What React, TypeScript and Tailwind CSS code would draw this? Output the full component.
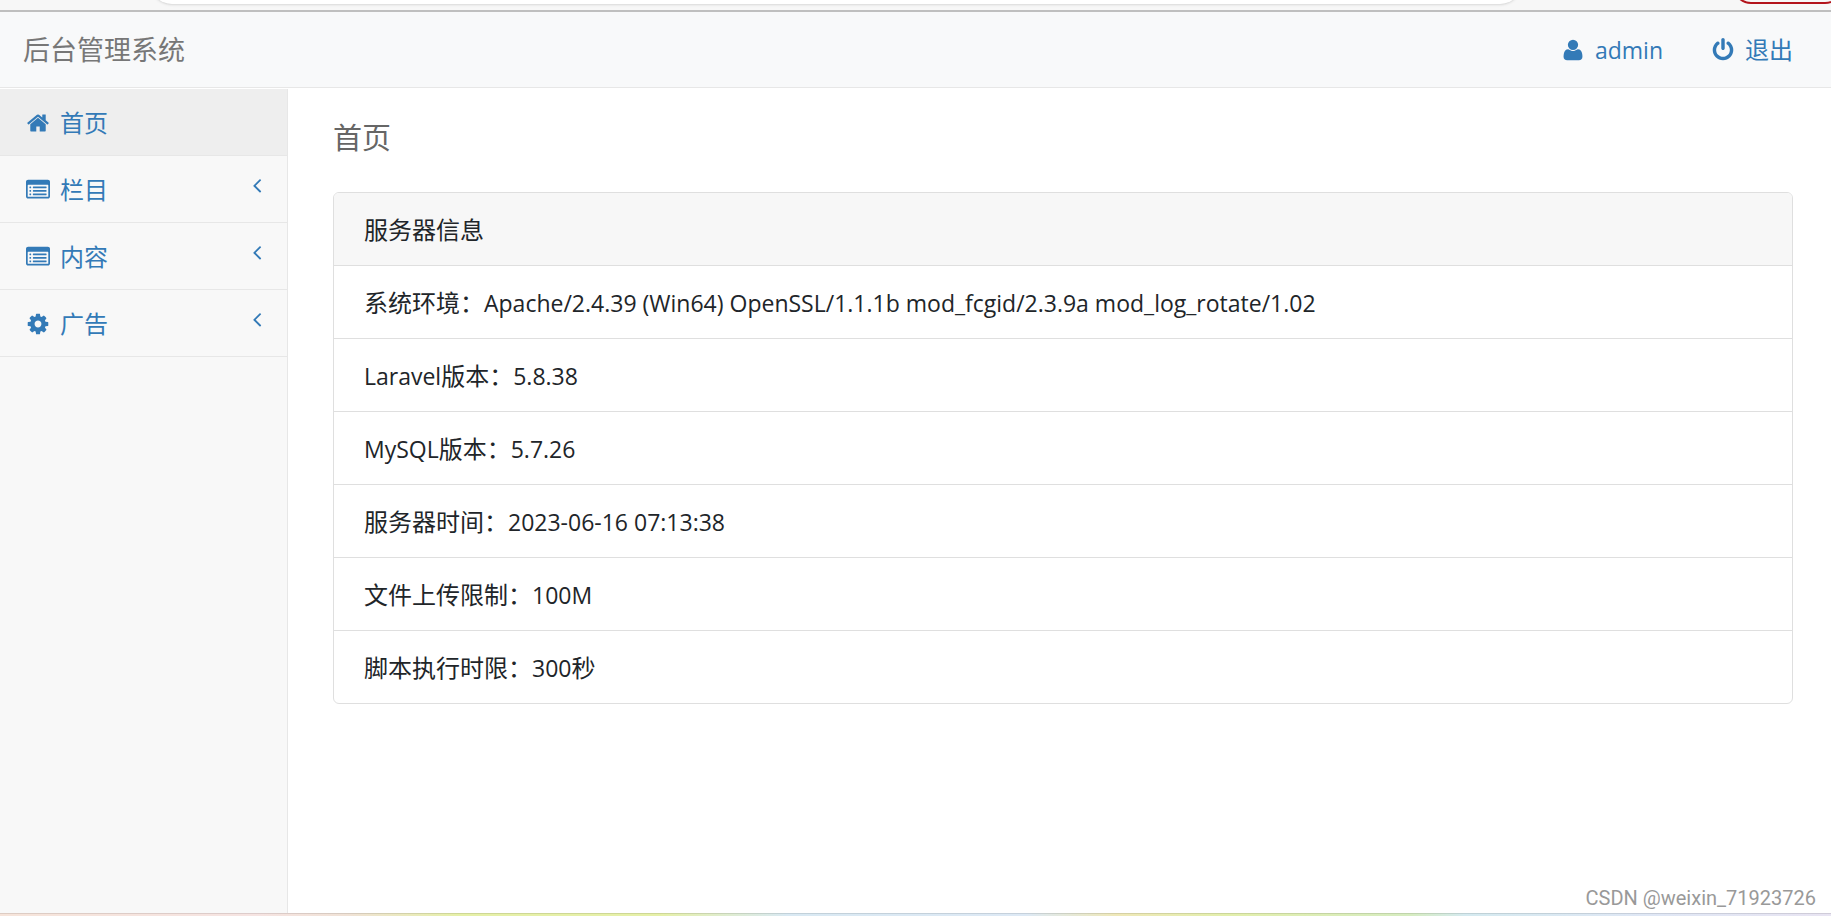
import type { ReactNode } from 'react';

const icons = {
  home: 'M1472 992v480q0 26-19 45t-45 19h-384v-384h-256v384h-384q-26 0-45-19t-19-45v-480q0-1 .5-3t.5-3l575-474 575 474q1 2 1 6zm223-69l-62 74q-8 9-21 11h-3q-13 0-21-7l-692-577-692 577q-12 8-24 7-13-2-21-11l-62-74q-8-10-7-23.5t11-21.5l719-599q32-26 76-26t76 26l244 204v-195q0-14 9-23t23-9h192q14 0 23 9t9 23v408l219 182q10 8 11 21.5t-7 23.5z',
  list: 'M160 128H1632q66 0 113 47t47 113V1376q0 66-47 113t-113 47H160q-66 0-113-47t-47-113V288q0-66 47-113t113-47zM160 512q-32 0-32 32V1376q0 32 32 32H1632q32 0 32-32V544q0-32-32-32zM288 640h64q32 0 32 32v64q0 32-32 32h-64q-32 0-32-32v-64q0-32 32-32zM288 896h64q32 0 32 32v64q0 32-32 32h-64q-32 0-32-32v-64q0-32 32-32zM288 1152h64q32 0 32 32v64q0 32-32 32h-64q-32 0-32-32v-64q0-32 32-32zM544 640h960q32 0 32 32v64q0 32-32 32h-960q-32 0-32-32v-64q0-32 32-32zM544 896h960q32 0 32 32v64q0 32-32 32h-960q-32 0-32-32v-64q0-32 32-32zM544 1152h960q32 0 32 32v64q0 32-32 32h-960q-32 0-32-32v-64q0-32 32-32z',
  cog: 'M1152 896q0-106-75-181t-181-75-181 75-75 181 75 181 181 75 181-75 75-181zm512-109v222q0 12-8 23t-20 13l-185 28q-19 54-39 91 35 50 107 138 10 12 10 25t-9 23q-27 37-99 108t-94 71q-12 0-26-9l-138-108q-44 23-91 38-16 136-29 186-7 28-36 28h-222q-14 0-24.5-8.5t-11.5-21.5l-28-184q-49-16-90-37l-141 107q-10 9-25 9-14 0-25-11-126-114-165-168-7-10-7-23 0-12 8-23 15-21 51-66.5t54-70.5q-27-50-41-99l-183-27q-13-2-21-12.5t-8-23.5v-222q0-12 8-23t19-13l186-28q14-46 39-92-40-57-107-138-10-12-10-24 0-10 9-23 26-36 98.5-107.5t94.5-71.5q13 0 26 10l138 107q44-23 91-38 16-136 29-186 7-28 36-28h222q14 0 24.5 8.5t11.5 21.5l28 184q49 16 90 37l142-107q9-9 24-9 13 0 25 10 129 119 165 170 7 8 7 22 0 12-8 23-15 21-51 66.5t-54 70.5q26 50 41 98l183 28q13 2 21 12.5t8 23.5z',
  user: 'M1600 1405q0 120-73 189.5t-194 69.5h-874q-121 0-194-69.5t-73-189.5q0-53 3.5-103.5t14-109 26.5-108.5 43-97.5 62-81 85.5-53.5 111.5-20q9 0 42 21.5t74.5 48 108 48 133.5 21.5 133.5-21.5 108-48 74.5-48 42-21.5q61 0 111.5 20t85.5 53.5 62 81 43 97.5 26.5 108.5 14 109 3.5 103.5zm-320-893q0 159-112.5 271.5t-271.5 112.5-271.5-112.5-112.5-271.5 112.5-271.5 271.5-112.5 271.5 112.5 112.5 271.5z',
  power: 'M1664 896q0 156-61 298t-164 245-245 164-298 61-298-61-245-164-164-245-61-298q0-182 80.5-343t226.5-270q43-32 95.5-25t83.5 50q32 42 24.5 94.5t-49.5 84.5q-98 74-151.5 181t-53.5 228q0 104 40.5 198.5t109.5 163.5 163.5 109.5 198.5 40.5 198.5-40.5 163.5-109.5 109.5-163.5 40.5-198.5q0-121-53.5-228t-151.5-181q-42-32-49.5-84.5t24.5-94.5q31-43 84-50t95 25q146 109 226.5 270t80.5 343zm-640-768v640q0 52-38 90t-90 38-90-38-38-90v-640q0-52 38-90t90-38 90 38 38 90z',
  angle: 'M1203 544q0 13-10 23l-393 393 393 393q10 10 10 23t-10 23l-50 50q-10 10-23 10t-23-10l-466-466q-10-10-10-23t10-23l466-466q10-10 23-10t23 10l50 50q10 10 10 23z',
};

function Icon({ name }: { name: keyof typeof icons }) {
  return (
    <svg viewBox="0 0 1792 1792" className="size-6 shrink-0 overflow-visible" fill="currentColor" fillRule="evenodd" aria-hidden="true">
      <path d={icons[name]} />
    </svg>
  );
}

const menu: { label: string; icon: keyof typeof icons; children: boolean }[] = [
  { label: '首页', icon: 'home', children: false },
  { label: '栏目', icon: 'list', children: true },
  { label: '内容', icon: 'list', children: true },
  { label: '广告', icon: 'cog', children: true },
];

const Latin = ({ children }: { children: ReactNode }) => <span className="text-[23px]">{children}</span>;

const rows: ReactNode[] = [
  <>系统环境：<Latin>Apache/2.4.39 (Win64) OpenSSL/1.1.1b mod_fcgid/2.3.9a mod_log_rotate/1.02</Latin></>,
  <><Latin>Laravel</Latin>版本：<Latin>5.8.38</Latin></>,
  <><Latin>MySQL</Latin>版本：<Latin>5.7.26</Latin></>,
  <>服务器时间：<Latin>2023-06-16 07:13:38</Latin></>,
  <>文件上传限制：<Latin>100M</Latin></>,
  <>脚本执行时限：<Latin>300</Latin>秒</>,
];

export default function App() {
  return (
    <div className="relative flex min-h-screen flex-col bg-white font-['Open_Sans','Noto_Sans_CJK_SC',sans-serif] text-2xl leading-9 text-[#212529]">
      <div className="flex h-3 items-start justify-between overflow-hidden border-b-2 border-[#bfbfbf] bg-[#f7f7f7] pl-[150px]">
        <div className="-mt-10 h-11 w-[1372px] rounded-full bg-white shadow-sm" />
        <div className="-mt-8 -mr-3 h-9 w-[110px] rounded-full border-2 border-[#b3141b] bg-[#f7f7f7]" />
      </div>

      <header className="flex h-[76px] items-center justify-between border-b border-[#e7e7e7] bg-[#f8f9fa] pt-px pr-[38px] pl-[23px]">
        <a href="#" className="text-[27px] text-[#777]">后台管理系统</a>
        <nav className="flex items-center gap-12 text-[#337ab7]">
          <a href="#" className="flex items-center gap-[10px]"><Icon name="user" /><Latin>admin</Latin></a>
          <a href="#" className="flex items-center gap-[10px]"><Icon name="power" />退出</a>
        </nav>
      </header>

      <div className="flex flex-1 pt-px">
        <aside className="w-72 shrink-0 border-r border-[#e7e7e7] bg-[#f8f8f8]">
          <ul>
            {menu.map((item, i) => (
              <li key={item.label} className="border-b border-[#e7e7e7]">
                <a href="#" className={`flex h-[66px] items-center gap-[10px] pt-[2px] pr-[18px] pl-[26px] text-[#337ab7] ${i === 0 ? 'bg-[#eee]' : ''}`}>
                  <Icon name={item.icon} />
                  <span className="flex-1">{item.label}</span>
                  {item.children && <span className="pb-[10px]"><Icon name="angle" /></span>}
                </a>
              </li>
            ))}
          </ul>
        </aside>

        <main className="min-w-0 flex-1 pt-[31px] pr-[38px] pb-10 pl-[45px]">
          <h1 className="mb-9 text-[29px] text-[#666]">首页</h1>
          <section className="overflow-hidden rounded-md border border-[#dfdfdf]">
            <h2 className="border-b border-[#dfdfdf] bg-[#f7f7f7] px-[30px] pt-[19px] pb-[17px]">服务器信息</h2>
            <ul className="divide-y divide-[#dfdfdf]">
              {rows.map((row, i) => (
                <li key={i} className="px-[30px] pt-[19px] pb-[17px]">{row}</li>
              ))}
            </ul>
          </section>
        </main>
      </div>

      <div className="h-[3px] border-t border-black/10 bg-[linear-gradient(to_right,#f6e4da,#f6e4e2_14%,#f0e2d6_19%,#e6f0a8_25%,#e6f0a8_36%,#d9e9f3_43%,#dde9f5_56%,#efe8b8_61%,#e3efac_67%,#d6ecc0_77%,#d5eaf0_80%,#dfe7f5_90%,#e8e4f2)]" />
      <div className="absolute right-[15px] bottom-1 font-['Roboto',sans-serif] text-xl leading-7 text-[#999]">CSDN @weixin_71923726</div>
    </div>
  );
}
